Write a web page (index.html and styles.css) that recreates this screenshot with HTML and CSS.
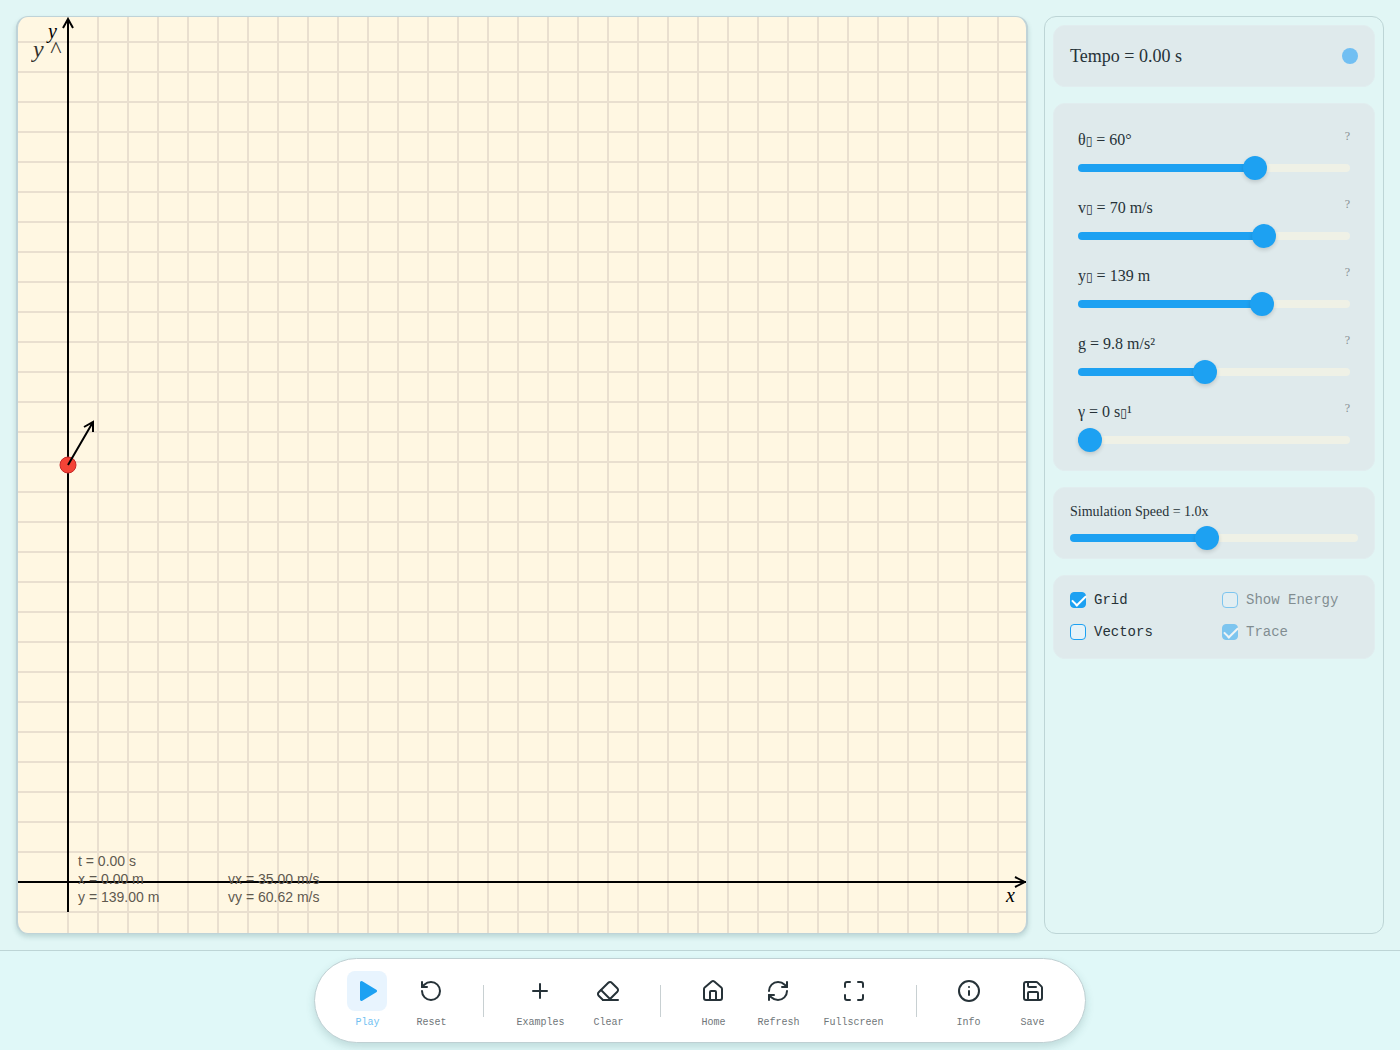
FILE: index.html
```html
<!DOCTYPE html>
<html lang="en">
<head>
<meta charset="utf-8">
<meta name="viewport" content="width=device-width, initial-scale=1">
<title>Projectile motion</title>
<link rel="stylesheet" href="styles.css">
</head>
<body>
<main class="workspace">
  <section class="stage" aria-label="Simulation">
    <svg class="plot" width="100%" height="100%">
      <defs>
        <pattern id="rows" x="0" y="24" width="30" height="30" patternUnits="userSpaceOnUse">
          <path class="grid-line" d="M0 1H30"/>
        </pattern>
        <pattern id="columns" x="49" y="0" width="30" height="30" patternUnits="userSpaceOnUse">
          <path class="grid-line" d="M1 0V30"/>
        </pattern>
      </defs>
      <rect y="24" width="100%" height="100%" fill="url(#rows)"/>
      <rect x="49" width="100%" height="100%" fill="url(#columns)"/>
      <!-- vertical axis, ending one cell below the origin -->
      <svg y="-21" width="100%" height="100%" overflow="visible">
        <line class="axis" x1="50" y1="23" x2="50" y2="100%"/>
      </svg>
      <path class="axis" d="M45 11L50 2L55 11"/>
      <text class="axis-name" x="30" y="21">y</text>
      <!-- everything placed from the bottom edge -->
      <svg y="100%" width="100%" height="1" overflow="visible">
        <line class="axis" x1="0" y1="-51" x2="100%" y2="-51"/>
        <circle class="ball" cx="50" cy="-468" r="8"/>
        <path class="axis" d="M50 -468L75 -511M66 -506L75 -511L75 -501"/>
      </svg>
      <svg x="100%" y="100%" width="1" height="1" overflow="visible">
        <path class="axis" d="M-11 -56L-1 -51L-11 -46"/>
        <text class="axis-name" x="-20" y="-31">x</text>
      </svg>
    </svg>
    <div class="axis-overlay">y ^</div>
    <div class="readout">
      <span>t = 0.00 s</span><span></span>
      <span>x = 0.00 m</span><span>vx = 35.00 m/s</span>
      <span>y = 139.00 m</span><span>vy = 60.62 m/s</span>
    </div>
  </section>

  <aside class="panel">
    <div class="card time"><span>Tempo = 0.00 s</span><span class="status"></span></div>
    <div class="card params">
      <div class="param">
        <div class="param-head"><label for="angle">θ<span class="box">▯</span> = 60°</label><button class="help">?</button></div>
        <input id="angle" class="slider" type="range" min="0" max="90" value="60" style="--fill:66%">
      </div>
      <div class="param">
        <div class="param-head"><label for="speed0">v<span class="box">▯</span> = 70 m/s</label><button class="help">?</button></div>
        <input id="speed0" class="slider" type="range" min="0" max="100" value="70" style="--fill:70%">
      </div>
      <div class="param">
        <div class="param-head"><label for="height0">y<span class="box">▯</span> = 139 m</label><button class="help">?</button></div>
        <input id="height0" class="slider" type="range" min="0" max="200" value="139" style="--fill:69%">
      </div>
      <div class="param">
        <div class="param-head"><label for="gravity">g = 9.8 m/s²</label><button class="help">?</button></div>
        <input id="gravity" class="slider" type="range" min="1" max="20" step="0.1" value="9.8" style="--fill:46%">
      </div>
      <div class="param">
        <div class="param-head"><label for="drag">γ = 0 s<span class="box">▯</span>¹</label><button class="help">?</button></div>
        <input id="drag" class="slider" type="range" min="0" max="1" step="0.1" value="0" style="--fill:2%">
      </div>
    </div>
    <div class="card rate">
      <label for="rate">Simulation Speed = 1.0x</label>
      <input id="rate" class="slider" type="range" min="0.1" max="2" step="0.1" value="1" style="--fill:47%">
    </div>
    <div class="card options">
      <label class="option"><input type="checkbox" checked>Grid</label>
      <label class="option off"><input type="checkbox" disabled>Show Energy</label>
      <label class="option"><input type="checkbox">Vectors</label>
      <label class="option off"><input type="checkbox" checked disabled>Trace</label>
    </div>
  </aside>
</main>

<footer class="footer">
  <nav class="toolbar" aria-label="Controls">
    <div class="group">
      <button class="tool primary"><span class="icon"><svg viewBox="0 0 24 24"><path fill="currentColor" d="M5 3.500a1.500 1.500 0 0 1 2.300-1.300l14 8.500a1.500 1.500 0 0 1 0 2.600l-14 8.500A1.500 1.500 0 0 1 5 20.500Z" stroke="none"/></svg></span>Play</button>
      <button class="tool"><span class="icon"><svg viewBox="0 0 24 24"><path d="M3 12a9 9 0 1 0 9-9 9.750 9.750 0 0 0-6.740 2.740L3 8"/><path d="M3 3v5h5"/></svg></span>Reset</button>
    </div>
    <div class="group">
      <button class="tool"><span class="icon"><svg viewBox="0 0 24 24"><path d="M5 12h14M12 5v14"/></svg></span>Examples</button>
      <button class="tool"><span class="icon"><svg viewBox="0 0 24 24"><path d="m7 21-4.300-4.300c-1-1-1-2.500 0-3.400l9.600-9.600c1-1 2.500-1 3.400 0l5.600 5.600c1 1 1 2.500 0 3.400L13 21"/><path d="M22 21H7"/><path d="m5 11 9 9"/></svg></span>Clear</button>
    </div>
    <div class="group">
      <button class="tool"><span class="icon"><svg viewBox="0 0 24 24"><path d="M15 21v-8a1 1 0 0 0-1-1h-4a1 1 0 0 0-1 1v8"/><path d="M3 10a2 2 0 0 1 .709-1.528l7-5.999a2 2 0 0 1 2.582 0l7 5.999A2 2 0 0 1 21 10v9a2 2 0 0 1-2 2H5a2 2 0 0 1-2-2z"/></svg></span>Home</button>
      <button class="tool"><span class="icon"><svg viewBox="0 0 24 24"><path d="M3 12a9 9 0 0 1 9-9 9.750 9.750 0 0 1 6.740 2.740L21 8"/><path d="M21 3v5h-5"/><path d="M21 12a9 9 0 0 1-9 9 9.750 9.750 0 0 1-6.740-2.740L3 16"/><path d="M8 16H3v5"/></svg></span>Refresh</button>
      <button class="tool"><span class="icon"><svg viewBox="0 0 24 24"><path d="M8 3H5a2 2 0 0 0-2 2v3M21 8V5a2 2 0 0 0-2-2h-3M3 16v3a2 2 0 0 0 2 2h3M16 21h3a2 2 0 0 0 2-2v-3"/></svg></span>Fullscreen</button>
    </div>
    <div class="group">
      <button class="tool"><span class="icon"><svg viewBox="0 0 24 24"><circle cx="12" cy="12" r="10"/><path d="M12 16v-4M12 8h.01"/></svg></span>Info</button>
      <button class="tool"><span class="icon"><svg viewBox="0 0 24 24"><path d="M15.200 3a2 2 0 0 1 1.400.6l3.800 3.800a2 2 0 0 1 .6 1.400V19a2 2 0 0 1-2 2H5a2 2 0 0 1-2-2V5a2 2 0 0 1 2-2z"/><path d="M17 21v-7a1 1 0 0 0-1-1H8a1 1 0 0 0-1 1v7"/><path d="M7 3v4a1 1 0 0 0 1 1h7"/></svg></span>Save</button>
    </div>
  </nav>
</footer>
</body>
</html>
```
FILE: styles.css
```css
* { box-sizing: border-box; }

body {
  margin: 0;
  min-height: 100vh;
  display: flex;
  flex-direction: column;
  background: #e0f8f8;
  color: #263238;
  font-family: "Liberation Serif", serif;
}

button {
  padding: 0;
  border: 0;
  background: none;
  font: inherit;
  color: inherit;
}

.workspace {
  flex: 1;
  display: flex;
  gap: 16px;
  padding: 16px;
  background: #e1f6f5;
}

/* Simulation area */
.stage {
  position: relative;
  flex: 1;
  border: 1px solid #bfd3d8;
  border-left-width: 2px;
  border-right-width: 2px;
  border-radius: 12px;
  background: #fff7e2;
  box-shadow: 0 3px 5px rgba(38, 90, 90, 0.2);
  overflow: hidden;
}

.plot {
  position: absolute;
  inset: 0;
}

.grid-line {
  fill: none;
  stroke: #e9dfcf;
  stroke-width: 2;
}

.axis {
  fill: none;
  stroke: #000;
  stroke-width: 2;
}

.axis-name {
  font: italic 20px "Liberation Serif", serif;
}

.ball {
  fill: #f44336;
  stroke: #c62828;
  stroke-width: 1;
}

.axis-overlay {
  position: absolute;
  left: 15px;
  top: 18px;
  font-size: 24px;
  font-style: italic;
  line-height: 28px;
  opacity: 0.8;
  color: #000;
}

.readout {
  position: absolute;
  left: 60px;
  bottom: 27px;
  display: grid;
  grid-template-columns: 150px auto;
  grid-auto-rows: 18px;
  font-family: "Liberation Sans", sans-serif;
  font-size: 14px;
  line-height: 18px;
  color: #60594f;
}

/* Side panel */
.panel {
  width: 340px;
  display: flex;
  flex-direction: column;
  gap: 16px;
  padding: 8px;
  border: 1px solid #bdd5d6;
  border-radius: 12px;
}

.card {
  padding: 16px;
  border: 1px solid #e1edef;
  border-radius: 12px;
  background: #dfeaec;
}

.time {
  display: flex;
  align-items: center;
  justify-content: space-between;
  min-height: 62px;
  font-size: 18px;
  line-height: 20px;
}

.status {
  width: 16px;
  height: 16px;
  border-radius: 50%;
  background: #71bff2;
}

.params {
  display: flex;
  flex-direction: column;
  gap: 16px;
  padding: 24px 24px 18px;
}

.param-head {
  display: flex;
  justify-content: space-between;
  align-items: flex-start;
  height: 24px;
  font-size: 16px;
  line-height: 24px;
}

.box {
  font-family: "DejaVu Sans", sans-serif;
  font-size: 12px;
  line-height: 16px;
}

.help {
  font-size: 12px;
  line-height: 16px;
  color: #868f92;
}

.slider {
  appearance: none;
  display: block;
  width: 100%;
  height: 8px;
  margin: 12px 0 8px;
  border-radius: 4px;
  background: linear-gradient(to right, #1da1f2 var(--fill), #eff1e6 var(--fill));
}

.slider::-webkit-slider-thumb {
  appearance: none;
  width: 24px;
  height: 24px;
  border-radius: 50%;
  background: #1da1f2;
  box-shadow: 0 2px 4px rgba(0, 0, 0, 0.15);
}

.rate {
  padding: 12px 16px;
  font-size: 14px;
}

.rate label {
  display: block;
  line-height: 24px;
}

.rate .slider {
  margin: 10px 0 4px;
}

.options {
  display: grid;
  grid-template-columns: 1fr 1fr;
  gap: 16px;
  padding: 16px 16px 18px;
}

.option {
  display: flex;
  align-items: center;
  gap: 8px;
  font-family: "Liberation Mono", monospace;
  font-size: 14px;
  line-height: 16px;
}

.option input {
  appearance: none;
  width: 16px;
  height: 16px;
  margin: 0;
  border: 1px solid #1da1f2;
  border-radius: 4px;
  background: #e5f2f8;
}

.option input:checked {
  background: #1da1f2;
}

.option input:checked::before {
  content: "";
  display: block;
  width: 12px;
  height: 6px;
  margin: 2px 1px;
  border: solid #fff;
  border-width: 0 0 2px 2px;
  transform: rotate(-45deg);
}

.off {
  opacity: 0.5;
}

/* Toolbar */
.footer {
  display: flex;
  justify-content: center;
  padding: 7px 16px;
  border-top: 1px solid #bdd5d6;
}

.toolbar {
  display: flex;
  align-items: center;
  padding: 12px 32px;
  border: 1px solid #bfd0d3;
  border-radius: 48px;
  background: #fff;
  box-shadow: 0 4px 8px rgba(38, 90, 90, 0.18);
}

.group {
  display: flex;
  gap: 24px;
}

.group + .group::before {
  content: "";
  align-self: center;
  width: 1px;
  height: 32px;
  margin: 0 8px;
  background: #c8d0d2;
}

.group + .group {
  margin-left: 24px;
}

.tool {
  display: flex;
  flex-direction: column;
  align-items: center;
  gap: 4px;
  min-width: 40px;
  font-family: "Liberation Mono", monospace;
  font-size: 10px;
  line-height: 15px;
  color: #6f7679;
}

.icon {
  display: grid;
  place-items: center;
  width: 40px;
  height: 40px;
  border-radius: 8px;
  color: #263238;
}

.icon svg {
  width: 24px;
  height: 24px;
  fill: none;
  stroke: currentColor;
  stroke-width: 2;
  stroke-linecap: round;
  stroke-linejoin: round;
}

.primary {
  color: #71bff2;
}

.primary .icon {
  background: #e8f4fe;
  color: #1da1f2;
}
```
